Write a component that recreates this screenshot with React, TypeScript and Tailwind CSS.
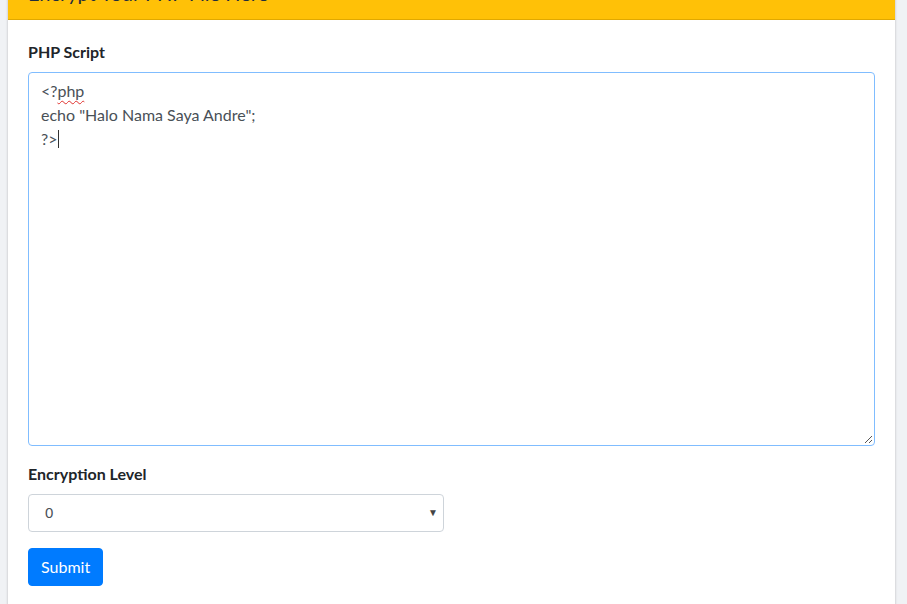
import React from "react";

export default function App() {
  return (
    <div
      className="w-[907px] h-[604px] overflow-hidden bg-[#f0f2f5] pl-[8px] pr-[12px]"
      style={{ fontFamily: "Lato, 'Noto Sans', sans-serif" }}
    >
      <div className="-mt-[31px] bg-white rounded-[4px] shadow-[0_0_1px_rgba(0,0,0,0.125),0_1px_3px_rgba(0,0,0,0.2)] h-[700px]">
        <div className="bg-[#ffc107] border-b border-[#e0a800] px-[20px] pt-[12px] pb-[14px] rounded-t-[4px]">
          <h5 className="text-[20px] leading-[24px] text-[#1f2d3d]">Encrypt Your PHP File Here</h5>
        </div>
        <div className="p-[20px]">
          <div className="mb-[16px]">
            <label className="block mb-[8px] text-[16px] leading-[24px] font-bold text-[#212529]">PHP Script</label>
            <div className="relative h-[374px] border border-[#80bdff] rounded-[4px] px-[12px] py-[6px] text-[16px] leading-[24px] text-[#495057] bg-white">
              <div>
                &lt;?
                <span className="underline decoration-wavy decoration-[#e0312e] decoration-[1px] underline-offset-[3px]">php</span>
              </div>
              <div>echo "Halo Nama Saya Andre";</div>
              <div className="flex items-center">
                ?&gt;<span className="inline-block w-[1px] h-[18px] bg-[#333] ml-[1px]" />
              </div>
              <svg className="absolute right-[1px] bottom-[1px]" width="10" height="10" viewBox="0 0 10 10">
                <line x1="9" y1="2" x2="2" y2="9" stroke="#555" strokeWidth="1" />
                <line x1="9" y1="6" x2="6" y2="9" stroke="#555" strokeWidth="1" />
              </svg>
            </div>
          </div>
          <div className="mb-[16px]">
            <label className="block mb-[8px] text-[16px] leading-[24px] font-bold text-[#212529]">Encryption Level</label>
            <div className="relative w-[416px] h-[38px] border border-[#ced4da] rounded-[4px] flex items-center pl-[16px] text-[16px] text-[#495057]">
              <span style={{ fontFamily: "'Liberation Sans', Arial, sans-serif" }} className="text-[15px]">0</span>
              <span className="absolute right-[5px] top-[10px] text-[10px] text-[#444]">▼</span>
            </div>
          </div>
          <button className="h-[38px] px-[12px] rounded-[4px] bg-[#007bff] text-white text-[16px] leading-[24px] border border-[#007bff]">
            Submit
          </button>
        </div>
      </div>
    </div>
  );
}
